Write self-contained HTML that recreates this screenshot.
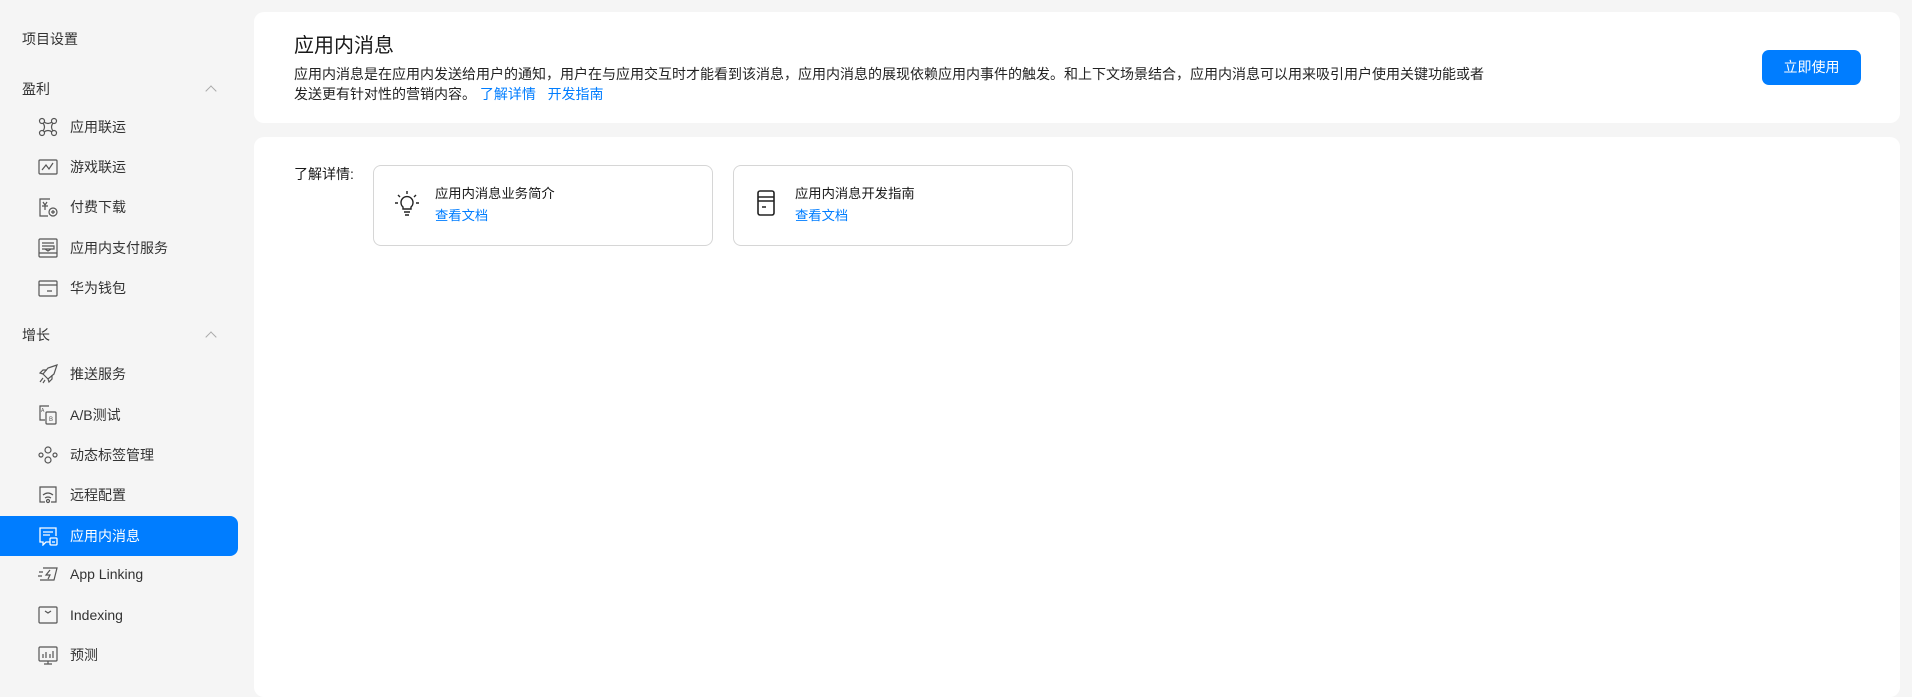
<!DOCTYPE html>
<html><head><meta charset="utf-8"><style>
*{margin:0;padding:0;box-sizing:border-box}
body{width:1912px;height:683px;background:#f5f5f5;font-family:"Liberation Sans","Noto Sans CJK SC",sans-serif;color:#191919;position:relative;overflow:hidden}
.sb{position:absolute;left:0;top:0;width:254px;height:683px}
.t{position:absolute;font-size:14px;line-height:20px;white-space:nowrap}
.grp{left:22px;color:#333}
.chev{position:absolute;left:207px;width:8px;height:8px;border-left:1px solid #aaa;border-top:1px solid #aaa;transform:rotate(45deg)}
.it{left:70px;color:#333}
.ic{position:absolute;left:38px;width:20px;height:20px}
.act{position:absolute;left:0;top:516px;width:238px;height:40px;background:#007dff;border-radius:0 8px 8px 0}
.card{position:absolute;background:#fff;border-radius:10px}
a{color:#007dff;text-decoration:none}
.dc{position:absolute;top:165px;width:340px;height:81px;border:1px solid #d6d6d6;border-radius:8px;background:#fff}
</style></head><body>
<div class="sb">
<div class="t grp" style="top:29px">项目设置</div>
<div class="t grp" style="top:79px">盈利</div><div class="chev" style="top:87px"></div>
<svg class="ic" style="top:117px" viewBox="0 0 20 20" fill="none" stroke="#555" stroke-width="1.2"><circle cx="4" cy="4" r="2.5"/><circle cx="16" cy="4" r="2.5"/><circle cx="4" cy="16" r="2.5"/><circle cx="16" cy="16" r="2.5"/><path d="M6 5q4 3 8 0M6 15q4-3 8 0M5 6q3 4 0 8M15 6q-3 4 0 8"/></svg>
<div class="t it" style="top:117px">应用联运</div>
<svg class="ic" style="top:157px" viewBox="0 0 20 20" fill="none" stroke="#555" stroke-width="1.2"><rect x="1" y="3" width="18" height="14" rx="1"/><path d="M4 13l4-5 3 4 4-6"/></svg>
<div class="t it" style="top:157px">游戏联运</div>
<svg class="ic" style="top:197px" viewBox="0 0 20 20" fill="none" stroke="#555" stroke-width="1.2"><path d="M12 2H2v17h8"/><path d="M5 5l2 3 2-3M4 9h6M7 8v5"/><circle cx="15" cy="15" r="4"/><path d="M15 13v4M13 15h4"/></svg>
<div class="t it" style="top:197px">付费下载</div>
<svg class="ic" style="top:238px" viewBox="0 0 20 20" fill="none" stroke="#555" stroke-width="1.2"><rect x="1" y="1" width="18" height="18" rx="1"/><path d="M4 5h12M4 8h12v3H4M1 15h18M7 11l3 2 3-2"/></svg>
<div class="t it" style="top:238px">应用内支付服务</div>
<svg class="ic" style="top:278px" viewBox="0 0 20 20" fill="none" stroke="#555" stroke-width="1.2"><rect x="1" y="3" width="18" height="15" rx="1"/><path d="M1 7h18M9 13h5"/></svg>
<div class="t it" style="top:278px">华为钱包</div>
<div class="t grp" style="top:325px">增长</div><div class="chev" style="top:333px"></div>
<svg class="ic" style="top:364px" viewBox="0 0 20 20" fill="none" stroke="#555" stroke-width="1.2"><path d="M19 1l-9 3-5 6 5 5 6-5 3-9zM5 10L2 9l3-3h4M10 15l1 3 3-3v-4M5 14l-3 4M7 16l-2 3"/></svg>
<div class="t it" style="top:364px">推送服务</div>
<svg class="ic" style="top:405px" viewBox="0 0 20 20" fill="none" stroke="#555" stroke-width="1.2"><path d="M11 1H2v14h5"/><rect x="8" y="7" width="10" height="12" rx="1"/><text x="3" y="7" font-size="5" fill="#555" stroke="none">A</text><text x="11" y="16" font-size="6" fill="#555" stroke="none">B</text></svg>
<div class="t it" style="top:405px">A/B测试</div>
<svg class="ic" style="top:445px" viewBox="0 0 20 20" fill="none" stroke="#555" stroke-width="1.2"><circle cx="10" cy="5" r="3"/><circle cx="10" cy="15" r="3"/><circle cx="3" cy="10" r="2"/><circle cx="17" cy="10" r="2"/></svg>
<div class="t it" style="top:445px">动态标签管理</div>
<svg class="ic" style="top:485px" viewBox="0 0 20 20" fill="none" stroke="#555" stroke-width="1.2"><path d="M7 17H2V2h16v15h-5"/><path d="M5 10q5-4 10 0M7 13q3-2 6 0"/><circle cx="10" cy="16" r="1.5"/></svg>
<div class="t it" style="top:485px">远程配置</div>
<div class="act"></div>
<svg class="ic" style="top:526px" viewBox="0 0 20 20" fill="none" stroke="#fff" stroke-width="1.3"><path d="M12 16H8l-3 3v-3H2V2h16v8"/><path d="M5 6h10M5 9h7"/><rect x="12" y="12" width="7" height="7" rx="1"/><path d="M14 16h3"/></svg>
<div class="t it" style="top:526px;color:#fff">应用内消息</div>
<svg class="ic" style="top:564px" viewBox="0 0 20 20" fill="none" stroke="#555" stroke-width="1.2"><path d="M5 4h14l-3 12H2M1 8h4M0 12h4M12 6l-4 5h4l-2 4"/></svg>
<div class="t it" style="top:564px">App Linking</div>
<svg class="ic" style="top:605px" viewBox="0 0 20 20" fill="none" stroke="#555" stroke-width="1.2"><rect x="1" y="2" width="18" height="16" rx="1"/><path d="M7 6l3 2 3-2"/></svg>
<div class="t it" style="top:605px">Indexing</div>
<svg class="ic" style="top:645px" viewBox="0 0 20 20" fill="none" stroke="#555" stroke-width="1.2"><rect x="1" y="2" width="18" height="14" rx="1"/><path d="M5 13V9M8 13V7M12 13V9M15 13V6M10 16v3M6 19h8"/></svg>
<div class="t it" style="top:645px">预测</div>
</div>
<div class="card" style="left:254px;top:12px;width:1646px;height:111px">
<div class="t" style="left:40px;top:21px;font-size:20px;line-height:26px">应用内消息</div>
<div style="position:absolute;left:40px;top:52px;width:1195px;font-size:14px;line-height:20px;color:#222">应用内消息是在应用内发送给用户的通知，用户在与应用交互时才能看到该消息，应用内消息的展现依赖应用内事件的触发。和上下文场景结合，应用内消息可以用来吸引用户使用关键功能或者发送更有针对性的营销内容。 <a>了解详情</a>&nbsp;&nbsp;&nbsp;<a>开发指南</a></div>
<div style="position:absolute;left:1508px;top:38px;width:99px;height:35px;background:#007dff;border-radius:7px;color:#fff;font-size:14px;line-height:35px;text-align:center">立即使用</div>
</div>
<div class="card" style="left:254px;top:137px;width:1646px;height:560px"></div>
<div class="t" style="left:294px;top:164px;font-size:14px">了解详情:</div>
<div class="dc" style="left:373px">
<svg style="position:absolute;left:20px;top:24px" width="26" height="26" viewBox="0 0 26 26" fill="none" stroke="#222" stroke-width="1.4"><path d="M13 1v3M4 5l2 2M22 5l-2 2M1 13h3M22 13h3"/><path d="M9 17a6 6 0 1 1 8 0v2H9z"/><path d="M10 22h6M11 25h4"/></svg>
<div class="t" style="left:61px;top:18px;font-size:13.3px">应用内消息业务简介</div>
<div class="t" style="left:61px;top:40px;font-size:13.3px"><a>查看文档</a></div>
</div>
<div class="dc" style="left:733px">
<svg style="position:absolute;left:22px;top:24px" width="20" height="26" viewBox="0 0 20 26" fill="none" stroke="#222" stroke-width="1.6"><rect x="2" y="1" width="16" height="24" rx="2"/><path d="M2 7h16M2 11h16M6 17h4"/></svg>
<div class="t" style="left:61px;top:18px;font-size:13.3px">应用内消息开发指南</div>
<div class="t" style="left:61px;top:40px;font-size:13.3px"><a>查看文档</a></div>
</div>
</body></html>
